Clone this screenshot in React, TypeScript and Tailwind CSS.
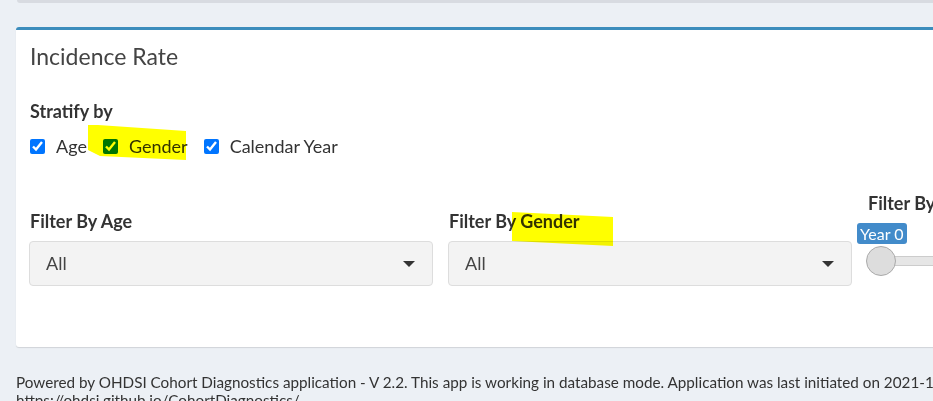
import React from "react";

function Caret() {
  return (
    <svg width="12" height="6" viewBox="0 0 12 6" className="shrink-0">
      <path d="M0 0 L12 0 L6 6 Z" fill="#333" />
    </svg>
  );
}

function SelectBox() {
  return (
    <div className="flex h-[45px] w-[404px] items-center justify-between rounded-[4px] border border-[#dddddd] bg-[#f3f3f3] pl-[16px] pr-[17px]">
      <span className="text-[18px] text-[#444]">All</span>
      <Caret />
    </div>
  );
}

function Check({ label }: { label: string }) {
  return (
    <label className="flex items-center">
      <input
        type="checkbox"
        defaultChecked
        className="m-0 h-[15px] w-[15px] accent-[#0075ff]"
      />
      <span className="ml-[11px] text-[18px] text-[#333]">{label}</span>
    </label>
  );
}

export default function App() {
  return (
    <div
      className="relative h-[401px] w-[933px] overflow-hidden bg-[#ecf0f5]"
      style={{ fontFamily: "Lato, 'Noto Sans', sans-serif" }}
    >
      <div className="ml-[17px] h-[3px] w-[1000px] rounded-bl-[3px] bg-[#d8dbe1]" />
      <div className="ml-[16px] mt-[24px] h-[320px] w-[1000px] rounded-[3px] border-t-[3px] border-[#3c8dbc] bg-white shadow-[0_1px_1px_rgba(0,0,0,0.12)]">
        <div className="pl-[14px] pt-[11px] text-[23px] leading-[30px] text-[#444]">
          Incidence Rate
        </div>
        <div className="pl-[14px] pt-[28px] text-[18px] font-bold leading-[24px] text-[#333]">
          Stratify by
        </div>
        <div className="flex gap-[16px] pl-[14px] pt-[11px] leading-[24px]">
          <Check label="Age" />
          <Check label="Gender" />
          <Check label="Calendar Year" />
        </div>
        <div className="flex gap-[15px] pl-[13px] pt-[31px]">
          <div className="flex flex-col pt-[20px]">
            <div className="pl-[1px] text-[18px] font-bold leading-[24px] text-[#333]">
              Filter By Age
            </div>
            <div className="mt-[8px]">
              <SelectBox />
            </div>
          </div>
          <div className="flex flex-col pt-[20px]">
            <div className="pl-[1px] text-[18px] font-bold leading-[24px] text-[#333]">
              Filter By Gender
            </div>
            <div className="mt-[8px]">
              <SelectBox />
            </div>
          </div>
          <div className="flex flex-col pt-[2px]">
            <div className="pl-[1px] text-[18px] font-bold leading-[24px] text-[#333]">
              Filter By Calendar Year
            </div>
            <div className="relative mt-[10px] h-[52px] w-[404px]">
              <div className="absolute left-[-10px] top-[-2px] rounded-[3px] bg-[#428bca] px-[3px] text-[16px] leading-[21px] text-white">
                Year 0
              </div>
              <div className="absolute left-[14px] top-[31px] h-[10px] w-[390px] rounded-[5px] border border-[#cccccc] bg-[#e6e6e6]" />
              <div className="absolute left-[-1px] top-[21px] h-[30px] w-[30px] rounded-full border border-[#aaaaaa] bg-[#dddddd]" />
            </div>
          </div>
        </div>
      </div>
      <div className="mt-[26px] pl-[16px] text-[15.25px] leading-[18px] text-[#333]">
        <div className="whitespace-nowrap">
          Powered by OHDSI Cohort Diagnostics application - V 2.2. This app is working in database mode. Application was last initiated on 2021-10-01
        </div>
        <div>https://ohdsi.github.io/CohortDiagnostics/</div>
      </div>
      <svg
        className="pointer-events-none absolute left-0 top-0 mix-blend-multiply"
        width="933"
        height="401"
      >
        <polygon points="88,125 98,125 186,131 186,160 100,156 88,150" fill="#ffff00" />
        <polygon points="512,212 613,217 613,246 512,241" fill="#ffff00" />
      </svg>
    </div>
  );
}
